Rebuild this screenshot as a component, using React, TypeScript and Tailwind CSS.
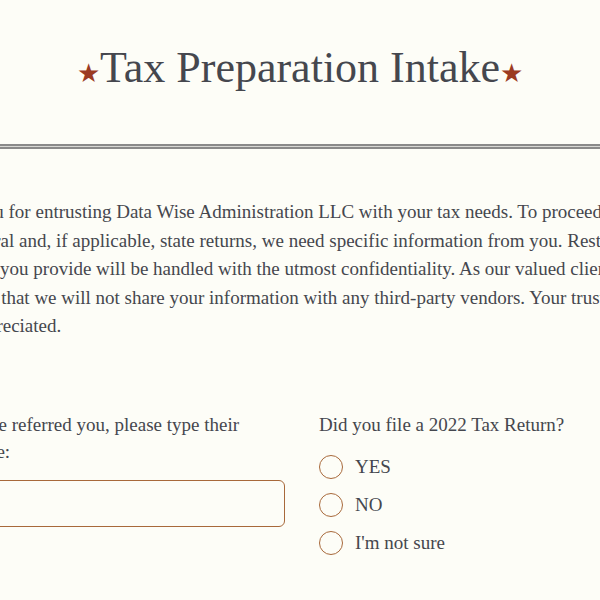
export default function App() {
  const lines = [
    "Thank you for entrusting Data Wise Administration LLC with your tax needs. To proceed with",
    "your federal and, if applicable, state returns, we need specific information from you. Rest assured,",
    "all papers you provide will be handled with the utmost confidentiality. As our valued client,",
    "we assure that we will not share your information with any third-party vendors. Your trust is",
    "much appreciated.",
  ]

  return (
    <div className="min-h-screen w-full overflow-hidden bg-[#fdfdf7] text-[#45474e] font-['Liberation_Serif',serif]">
      <header className="pt-[40px]">
        <h1 className="text-center text-[44px] leading-[56px] whitespace-nowrap">
          <span className="text-[#9b3b22] text-[26px]">★</span>
          Tax Preparation Intake
          <span className="text-[#9b3b22] text-[26px]">★</span>
        </h1>
        <div className="mt-[42px] h-[5px] border-y-2 border-[#8a8a8a] bg-[#d8d8d4]" />
      </header>

      <div className="flex justify-center pl-[4px]">
        <main className="w-[760px] shrink-0 pt-[49px]">
          <p className="text-[19px] leading-[28.5px] whitespace-nowrap">
            {lines.map((l, i) => (
              <span key={i} className="block">{l}</span>
            ))}
          </p>

          <form className="grid grid-cols-2 gap-x-[34px] mt-[70px]">
            <label className="block">
              <span className="block text-[19px] leading-[27px]">
                If someone referred you, please type their
                <br />
                legal name:
              </span>
              <input
                name="referral"
                className="mt-[15px] w-full h-[47px] rounded-md border-[1.5px] border-[#a8693b] bg-transparent px-3 outline-none"
              />
            </label>

            <fieldset>
              <legend className="text-[19px] leading-[27px]">Did you file a 2022 Tax Return?</legend>
              <div className="mt-[17px] flex flex-col gap-[14px]">
                {["YES", "NO", "I'm not sure"].map((o) => (
                  <label key={o} className="flex items-center gap-[12px] text-[19px] leading-[24px]">
                    <input
                      type="radio"
                      name="filed"
                      className="appearance-none w-[24px] h-[24px] rounded-full border-[1.5px] border-[#a8693b] bg-transparent"
                    />
                    {o}
                  </label>
                ))}
              </div>
            </fieldset>
          </form>
        </main>
      </div>
    </div>
  )
}
